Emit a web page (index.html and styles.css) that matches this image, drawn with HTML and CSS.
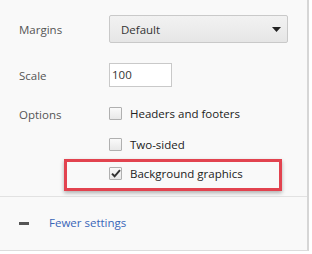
FILE: index.html
```html
<!DOCTYPE html>
<html lang="en">
<head>
    <meta charset="UTF-8">
    <title>Print settings</title>
    <link rel="stylesheet" href="styles.css">
</head>
<body>
    <div class="panel">
        <div class="settings">
            <div class="row">
                <span class="label">Margins</span>
                <div class="select">
                    <span>Default</span>
                    <svg class="arrow" width="9" height="5" viewBox="0 0 9 5"><path d="M0 0H9L4.5 5Z" fill="#222"/></svg>
                </div>
            </div>
            <div class="row scale-row">
                <span class="label">Scale</span>
                <div class="input">100</div>
            </div>
            <div class="row options-row">
                <span class="label">Options</span>
                <div class="options">
                    <div class="check"><span class="box"></span>Headers and footers</div>
                    <div class="check"><span class="box"></span>Two-sided</div>
                    <div class="check highlighted">
                        <span class="box">
                            <svg width="10" height="9" viewBox="0 0 10 9"><path d="M1 4.6L3.6 7.3L9 1.2" fill="none" stroke="#333" stroke-width="2"/></svg>
                        </span>Background graphics
                    </div>
                </div>
            </div>
        </div>
        <div class="footer">
            <span class="dash"></span>
            <a class="link">Fewer settings</a>
        </div>
    </div>
</body>
</html>
```

FILE: styles.css
```css
body {
    margin: 0;
    background: #fff;
    font-family: "Open Sans", sans-serif;
    font-size: 11.5px;
    color: #333;
}
.panel {
    width: 307px;
    height: 250px;
    background: #f9f9f9;
    border-right: 2px solid #d6d6d6;
    border-bottom: 1px solid #dcdcdc;
}
.settings {
    height: 197px;
    border-bottom: 1px solid #e2e2e2;
    padding-top: 15px;
    box-sizing: border-box;
}
.row {
    display: flex;
    align-items: center;
}
.label {
    width: 90px;
    padding-left: 19px;
    color: #555;
}
.select {
    width: 179px;
    height: 28px;
    box-sizing: border-box;
    border: 1px solid #c9c9c9;
    border-radius: 2px;
    background: linear-gradient(#f2f2f2, #e6e6e6);
    display: flex;
    align-items: center;
    justify-content: space-between;
    padding: 0 6px 0 11px;
    color: #333;
}
.scale-row {
    margin-top: 20px;
}
.input {
    width: 63px;
    height: 24px;
    box-sizing: border-box;
    border: 1px solid #c9c9c9;
    background: #fff;
    padding: 3px 2px;
    color: #333;
}
.options-row {
    margin-top: 16px;
    align-items: flex-start;
}
.options-row .label {
    margin-top: 4px;
}
.options {
    display: flex;
    flex-direction: column;
    gap: 11px;
}
.check {
    display: flex;
    align-items: center;
    height: 20px;
    color: #222;
}
.box {
    width: 13px;
    height: 13px;
    box-sizing: border-box;
    border: 1px solid #b0b0b0;
    border-radius: 1px;
    background: linear-gradient(#fafafa, #e8e8e8);
    margin-right: 8px;
    display: flex;
    align-items: center;
    justify-content: center;
}
.highlighted {
    position: relative;
    margin-top: -2px;
}
.highlighted::before {
    content: "";
    position: absolute;
    left: -45px;
    top: -4px;
    width: 218px;
    height: 32px;
    box-sizing: border-box;
    border: 3px solid #e2434f;
    box-shadow: 0 2px 4px rgba(0, 0, 0, 0.3);
}
.footer {
    display: flex;
    align-items: center;
    height: 50px;
}
.dash {
    width: 10px;
    height: 3px;
    background: #555;
    margin: 2px 20px 0 19px;
}
.link {
    color: #3a66b8;
}
```
